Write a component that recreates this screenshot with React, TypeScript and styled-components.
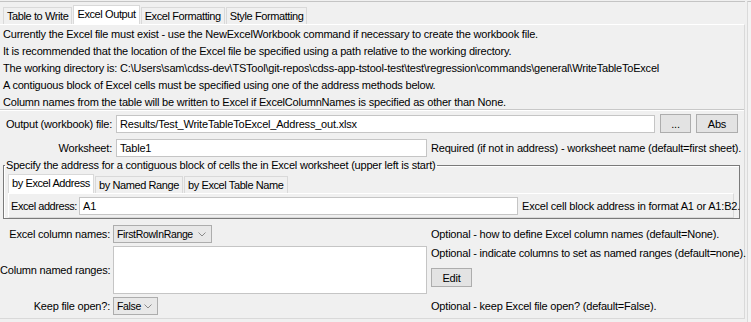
import styled, { createGlobalStyle } from "styled-components";

const Global = createGlobalStyle`
  html, body {
    margin: 0;
    padding: 0;
    background: #f0f0f0;
  }
  body {
    font-family: "Liberation Sans", Arial, sans-serif;
    font-size: 11px;
    letter-spacing: -0.2px;
    color: #000;
  }
`;

const Window = styled.div`
  width: 751px;
  height: 322px;
  display: flex;
  overflow: hidden;
  background: #f0f0f0;
`;

const Main = styled.div`
  width: 745px;
  display: flex;
  flex-direction: column;
  border-top: 1px solid #c4c4c4;
  margin-top: 1px;
`;

const Edge = styled.div`
  flex: 1;
  border-left: 1px solid #dadada;
  border-top: 1px solid #c4c4c4;
  margin-top: 1px;
  margin-left: 2px;
  background: #f3f3f3;
`;

const TabBar = styled.div<{ $inner?: boolean }>`
  display: flex;
  align-items: flex-end;
  padding-left: ${({ $inner }) => ($inner ? 0 : 3)}px;
  height: 22px;
  flex: none;
`;

const Tab = styled.div<{ $active?: boolean }>`
  height: ${({ $active }) => ($active ? 19 : 17)}px;
  line-height: ${({ $active }) => ($active ? 17 : 16)}px;
  padding: 0 3px;
  border: 1px solid #d9d9d9;
  border-bottom: none;
  margin-right: 1px;
  box-sizing: border-box;
  letter-spacing: -0.4px;
  background: ${({ $active }) => ($active ? "#fff" : "#f0f0f0")};
  position: relative;
  z-index: ${({ $active }) => ($active ? 1 : 0)};
  white-space: nowrap;
`;

const Panel = styled.div`
  flex: 1;
  border-top: 1px solid #fff;
  border-right: 1px solid #d9d9d9;
  border-bottom: 1px solid #d9d9d9;
  margin-bottom: 3px;
  display: flex;
  flex-direction: column;
`;

const Notes = styled.div`
  padding: 1px 3px 0;
`;

const Note = styled.div`
  line-height: 17px;
  white-space: nowrap;
`;

const Separator = styled.div`
  height: 0;
  border-top: 1px solid #c8c8c8;
  border-bottom: 1px solid #fff;
  margin: -2px 0 3px;
`;

const Row = styled.div<{ $gap?: number }>`
  display: flex;
  align-items: center;
  margin-bottom: ${({ $gap }) => $gap ?? 6}px;
`;

const Label = styled.div<{ $width: number; $left?: boolean }>`
  width: ${({ $width }) => $width}px;
  flex: none;
  text-align: ${({ $left }) => ($left ? "left" : "right")};
  letter-spacing: ${({ $left }) => ($left ? -0.45 : -0.2)}px;
  padding-right: 4px;
  box-sizing: border-box;
  white-space: nowrap;
`;

const Field = styled.div<{ $width?: number; $height?: number }>`
  ${({ $width }) => ($width ? `width: ${$width}px; flex: none;` : "flex: 1;")}
  height: ${({ $height }) => $height ?? 18}px;
  box-sizing: border-box;
  background: #fff;
  border: 1px solid #c5c5c5;
  padding: 0 3px;
  line-height: 16px;
  white-space: nowrap;
  overflow: hidden;
`;

const Desc = styled.div`
  padding-left: 4px;
  white-space: nowrap;
`;

const Button = styled.div<{ $width: number; $flush?: boolean }>`
  width: ${({ $width }) => $width}px;
  height: 19px;
  box-sizing: border-box;
  background: #e3e3e3;
  border: 1px solid #adadad;
  display: flex;
  align-items: center;
  justify-content: center;
  margin-left: ${({ $flush }) => ($flush ? 0 : 5)}px;
`;

const Combo = styled.div<{ $width: number }>`
  width: ${({ $width }) => $width}px;
  height: 18px;
  box-sizing: border-box;
  background: #e8e8e8;
  border: 1px solid #adadad;
  display: flex;
  align-items: center;
  justify-content: space-between;
  padding: 0 5px 0 3px;
  font-size: 10.5px;
  letter-spacing: -0.35px;
  white-space: nowrap;
`;

const Chevron = () => (
  <svg width="8" height="5" viewBox="0 0 8 5">
    <path d="M0.5 0.5 L4 4 L7.5 0.5" fill="none" stroke="#8a8a8a" strokeWidth="1" />
  </svg>
);

const Form = styled.div`
  padding: 0 6px 0 0;
`;

const Group = styled.fieldset`
  margin: 0 4px 0 3px;
  padding: 0 5px 0 4px;
  border: 1px solid #7a7a7a;
  box-shadow: inset 1px 1px 0 #fff;
  min-width: 0;
`;

const Legend = styled.legend`
  padding: 0 1px;
  margin-left: -3px;
  line-height: 12px;
  white-space: nowrap;
`;

const InnerPanel = styled.div`
  border: 1px solid #d9d9d9;
  border-top-color: #fff;
  border-left-color: #fff;
  padding: 3px 2px 2px;
  display: flex;
  align-items: center;
`;

const Lower = styled.div`
  display: grid;
  grid-template-columns: 113px 314px 1fr;
  row-gap: 3px;
  align-items: center;
  margin-top: 6px;
`;

const GridLabel = styled.div`
  text-align: right;
  padding-right: 3px;
  white-space: nowrap;
`;

const Stack = styled.div`
  display: flex;
  flex-direction: column;
  align-items: flex-start;
  align-self: start;
  gap: 9px;
  padding: 1px 0 0 4px;
  white-space: nowrap;
`;

export default function App() {
  return (
    <>
      <Global />
      <Window>
        <Main>
          <TabBar>
            <Tab>Table to Write</Tab>
            <Tab $active>Excel Output</Tab>
            <Tab>Excel Formatting</Tab>
            <Tab>Style Formatting</Tab>
          </TabBar>
          <Panel>
            <Notes>
              <Note>Currently the Excel file must exist - use the NewExcelWorkbook command if necessary to create the workbook file.</Note>
              <Note>It is recommended that the location of the Excel file be specified using a path relative to the working directory.</Note>
              <Note>The working directory is: C:\Users\sam\cdss-dev\TSTool\git-repos\cdss-app-tstool-test\test\regression\commands\general\WriteTableToExcel</Note>
              <Note>A contiguous block of Excel cells must be specified using one of the address methods below.</Note>
              <Note>Column names from the table will be written to Excel if ExcelColumnNames is specified as other than None.</Note>
            </Notes>
            <Separator />
            <Form>
              <Row>
                <Label $width={116}>Output (workbook) file:</Label>
                <Field>Results/Test_WriteTableToExcel_Address_out.xlsx</Field>
                <Button $width={31}>...</Button>
                <Button $width={42}>Abs</Button>
              </Row>
              <Row $gap={2}>
                <Label $width={116}>Worksheet:</Label>
                <Field $width={311}>Table1</Field>
                <Desc>Required (if not in address) - worksheet name (default=first sheet).</Desc>
              </Row>
            </Form>
            <Group>
              <Legend>Specify the address for a contiguous block of cells the in Excel worksheet (upper left is start)</Legend>
              <TabBar $inner>
                <Tab $active>by Excel Address</Tab>
                <Tab>by Named Range</Tab>
                <Tab>by Excel Table Name</Tab>
              </TabBar>
              <InnerPanel>
                <Label $width={68} $left>Excel address:</Label>
                <Field $width={439}>A1</Field>
                <Desc>Excel cell block address in format A1 or A1:B2.</Desc>
              </InnerPanel>
            </Group>
            <Lower>
              <GridLabel>Excel column names:</GridLabel>
              <div>
                <Combo $width={99}>
                  FirstRowInRange
                  <Chevron />
                </Combo>
              </div>
              <Desc>Optional - how to define Excel column names (default=None).</Desc>
              <GridLabel>Column named ranges:</GridLabel>
              <Field $width={314} $height={48} />
              <Stack>
                <div>Optional - indicate columns to set as named ranges (default=none).</div>
                <Button $width={41} $flush>Edit</Button>
              </Stack>
              <GridLabel>Keep file open?:</GridLabel>
              <div>
                <Combo $width={45}>
                  False
                  <Chevron />
                </Combo>
              </div>
              <Desc>Optional - keep Excel file open? (default=False).</Desc>
            </Lower>
          </Panel>
        </Main>
        <Edge />
      </Window>
    </>
  );
}
